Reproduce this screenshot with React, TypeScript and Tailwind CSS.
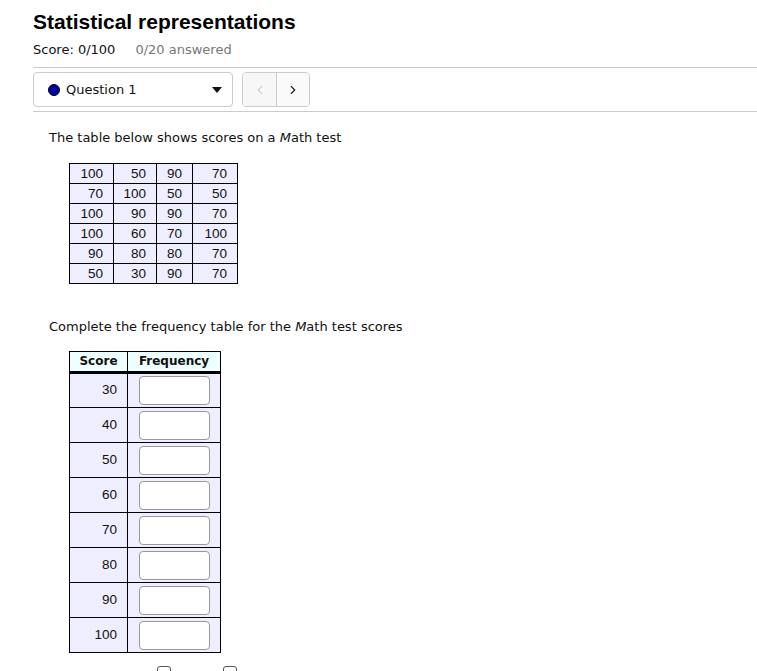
import { ChevronLeft, ChevronRight } from 'lucide-react';

const scores = [
  [100, 50, 90, 70],
  [70, 100, 50, 50],
  [100, 90, 90, 70],
  [100, 60, 70, 100],
  [90, 80, 80, 70],
  [50, 30, 90, 70],
];

const freqRows = [30, 40, 50, 60, 70, 80, 90, 100];

const colWidths = ['w-[44px]', 'w-[43px]', 'w-[36px]', 'w-[45px]'];

export default function App() {
  return (
    <div className="min-h-screen overflow-hidden bg-white pl-[33px] pt-[8px] font-['DejaVu_Sans',Verdana,sans-serif] text-[#111]">
      <h1 className="font-['Liberation_Sans',Arial,sans-serif] text-[21px] font-bold leading-[28px] text-black">
        Statistical representations
      </h1>
      <div className="mt-[5px] flex gap-[20px] text-[13px] leading-[18px]">
        <span>Score: 0/100</span>
        <span className="text-[#777]">0/20 answered</span>
      </div>

      <div className="mt-[8px] border-t border-[#ccc]">
        <div className="flex items-center gap-[9px] py-[4px]">
          <div className="flex h-[35px] w-[200px] items-center rounded-[4px] border border-[#ccc] pl-[14px] pr-[10px]">
            <span className="h-[12px] w-[12px] rounded-full border border-black bg-[#0000a8]" />
            <span className="ml-[6px] text-[13px]">Question 1</span>
            <svg className="ml-auto" width="10" height="6" viewBox="0 0 10 6">
              <path d="M0 0h10L5 6z" fill="#111" />
            </svg>
          </div>
          <div className="flex h-[35px] overflow-hidden rounded-[4px] border border-[#ccc]">
            <button className="flex w-[33px] items-center justify-center bg-[#f7f7f7] text-[#aaa]">
              <ChevronLeft size={14} strokeWidth={1.5} />
            </button>
            <button className="flex w-[33px] items-center justify-center border-l border-[#ccc] bg-[#fafafa] text-[#222]">
              <ChevronRight size={14} strokeWidth={2} />
            </button>
          </div>
        </div>
        <div className="border-t border-[#ccc]" />
      </div>

      <div className="pl-[16px]">
        <p className="mt-[17px] text-[13px] leading-[18px]">
          The table below shows scores on a <i>M</i>ath test
        </p>

        <table className="ml-[20px] mt-[16px] border-collapse border border-black bg-[#eeeeff] font-['Liberation_Sans',Arial,sans-serif] text-[13.5px]">
          <tbody>
            {scores.map((row, r) => (
              <tr key={r} className="h-[20px]">
                {row.map((v, c) => (
                  <td key={c} className={`${colWidths[c]} border border-black pr-[10px] text-right leading-[18px]`}>
                    {v}
                  </td>
                ))}
              </tr>
            ))}
          </tbody>
        </table>

        <p className="mt-[34px] text-[13px] leading-[18px]">
          Complete the frequency table for the <i>M</i>ath test scores
        </p>

        <table className="ml-[20px] mt-[15px] border-collapse border border-black bg-[#eeeeff] font-['Liberation_Sans',Arial,sans-serif] text-[13.5px]">
          <thead>
            <tr className="h-[21px] bg-[#eeffff]">
              <th className="w-[58px] border border-b-[3px] border-black text-center font-['DejaVu_Sans',sans-serif] text-[12px] font-bold leading-[17px]">
                Score
              </th>
              <th className="w-[93px] border border-b-[3px] border-black text-center font-['DejaVu_Sans',sans-serif] text-[12px] font-bold leading-[17px]">
                Frequency
              </th>
            </tr>
          </thead>
          <tbody>
            {freqRows.map((v) => (
              <tr key={v} className="h-[35px]">
                <td className="border border-black pr-[10px] text-right">{v}</td>
                <td className="border border-black pl-[11px]">
                  <input className="block h-[29px] w-[71px] rounded-[4px] border border-[#999] bg-white" />
                </td>
              </tr>
            ))}
          </tbody>
        </table>

        <div className="mt-[13px] flex gap-[52px] pl-[108px]">
          <span className="h-[16px] w-[14px] rounded-[3px] border border-[#555]" />
          <span className="h-[16px] w-[14px] rounded-[3px] border border-[#555]" />
        </div>
      </div>
    </div>
  );
}
